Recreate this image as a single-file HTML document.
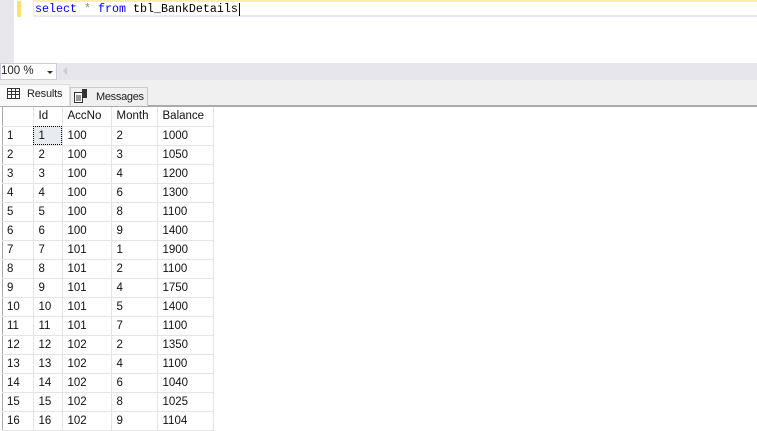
<!DOCTYPE html>
<html><head><style>
*{margin:0;padding:0;box-sizing:border-box}
body{width:757px;height:431px;overflow:hidden;background:#fff;position:relative;font-family:"Liberation Sans",sans-serif;font-size:12px;color:#1e1e1e}
.a{position:absolute}
table{border-collapse:collapse;position:absolute;left:2px;top:107px;table-layout:fixed}
td{height:19px;border-right:1px solid #e4e4e4;border-bottom:1px solid #e4e4e4;padding:0 0 0 5px;white-space:nowrap;font-size:11.5px;color:#111}
</style></head><body>
<div class="a" style="left:0;top:0;width:14px;height:63px;background:#e8e8ec"></div>
<div class="a" style="left:17px;top:1px;width:4px;height:16px;background:#fde26a"></div>
<div class="a" style="left:33px;top:0;width:724px;height:17px;border-top:2px solid #fbf0a8;border-bottom:2px solid #eaeaf2;border-left:1px solid #eaeaf2"></div>
<div class="a" style="left:35px;top:2px;font-family:'Liberation Mono',monospace;font-size:11.67px;line-height:14px;white-space:pre"><span style="color:#0000ff">select</span> <span style="color:#888">*</span> <span style="color:#0000ff">from</span> <span style="color:#000">tbl_BankDetails</span></div>
<div class="a" style="left:239px;top:3px;width:1px;height:13px;background:#000"></div>
<div class="a" style="left:0;top:63px;width:757px;height:17px;background:#e6e6ec"></div>
<div class="a" style="left:0;top:63px;width:57px;height:17px;background:#fff;border:1px solid #ccd;font-size:11.5px;line-height:15px">100 %</div>
<div class="a" style="left:47px;top:71px;width:0;height:0;border-left:3px solid transparent;border-right:3px solid transparent;border-top:3px solid #333"></div>
<div class="a" style="left:63px;top:67px;width:0;height:0;border-top:4px solid transparent;border-bottom:4px solid transparent;border-right:4px solid #ccc"></div>
<div class="a" style="left:0;top:80px;width:757px;height:27px;background:#f0f0f0;border-bottom:2px solid #aaa"></div>
<div class="a" style="left:0;top:84px;width:70px;height:22px;background:#fafafa;border-right:1px solid #ddd;border-top:1px solid #ddd"></div>
<svg class="a" style="left:7px;top:88px" width="13" height="11"><rect x="0.5" y="0.5" width="12" height="10" fill="#fff" stroke="#333"/><path d="M0 3.5H13M0 6.5H13M4.5 0V11M8.5 0V11" stroke="#333"/></svg>
<div class="a" style="left:27px;top:88px;font-size:11px;letter-spacing:-0.2px">Results</div>
<div class="a" style="left:70px;top:87px;width:78px;height:19px;background:#f0f0f0;border:1px solid #ccc;border-bottom:none"></div>
<svg class="a" style="left:74px;top:89px" width="14" height="14"><rect x="0.5" y="3.5" width="8" height="10" fill="#fff" stroke="#333"/><path d="M2 7H7M2 9H7M2 11H7" stroke="#333"/><rect x="8" y="0" width="5" height="9" fill="#333"/></svg>
<div class="a" style="left:96px;top:91px;font-size:11px;letter-spacing:-0.3px">Messages</div>
<div class="a" style="left:2px;top:107px;width:1px;height:324px;background:#aaa"></div>
<table>
<colgroup><col style="width:31px"><col style="width:29px"><col style="width:49px"><col style="width:46px"><col style="width:56px"></colgroup>
<tr><td></td><td>Id</td><td>AccNo</td><td>Month</td><td>Balance</td></tr>
<tr><td>1</td><td style="background:#e8ecf0;outline:1px dotted #000;outline-offset:-1px">1</td><td>100</td><td>2</td><td>1000</td></tr>
<tr><td>2</td><td>2</td><td>100</td><td>3</td><td>1050</td></tr>
<tr><td>3</td><td>3</td><td>100</td><td>4</td><td>1200</td></tr>
<tr><td>4</td><td>4</td><td>100</td><td>6</td><td>1300</td></tr>
<tr><td>5</td><td>5</td><td>100</td><td>8</td><td>1100</td></tr>
<tr><td>6</td><td>6</td><td>100</td><td>9</td><td>1400</td></tr>
<tr><td>7</td><td>7</td><td>101</td><td>1</td><td>1900</td></tr>
<tr><td>8</td><td>8</td><td>101</td><td>2</td><td>1100</td></tr>
<tr><td>9</td><td>9</td><td>101</td><td>4</td><td>1750</td></tr>
<tr><td>10</td><td>10</td><td>101</td><td>5</td><td>1400</td></tr>
<tr><td>11</td><td>11</td><td>101</td><td>7</td><td>1100</td></tr>
<tr><td>12</td><td>12</td><td>102</td><td>2</td><td>1350</td></tr>
<tr><td>13</td><td>13</td><td>102</td><td>4</td><td>1100</td></tr>
<tr><td>14</td><td>14</td><td>102</td><td>6</td><td>1040</td></tr>
<tr><td>15</td><td>15</td><td>102</td><td>8</td><td>1025</td></tr>
<tr><td>16</td><td>16</td><td>102</td><td>9</td><td>1104</td></tr>
</table>
</body></html>
